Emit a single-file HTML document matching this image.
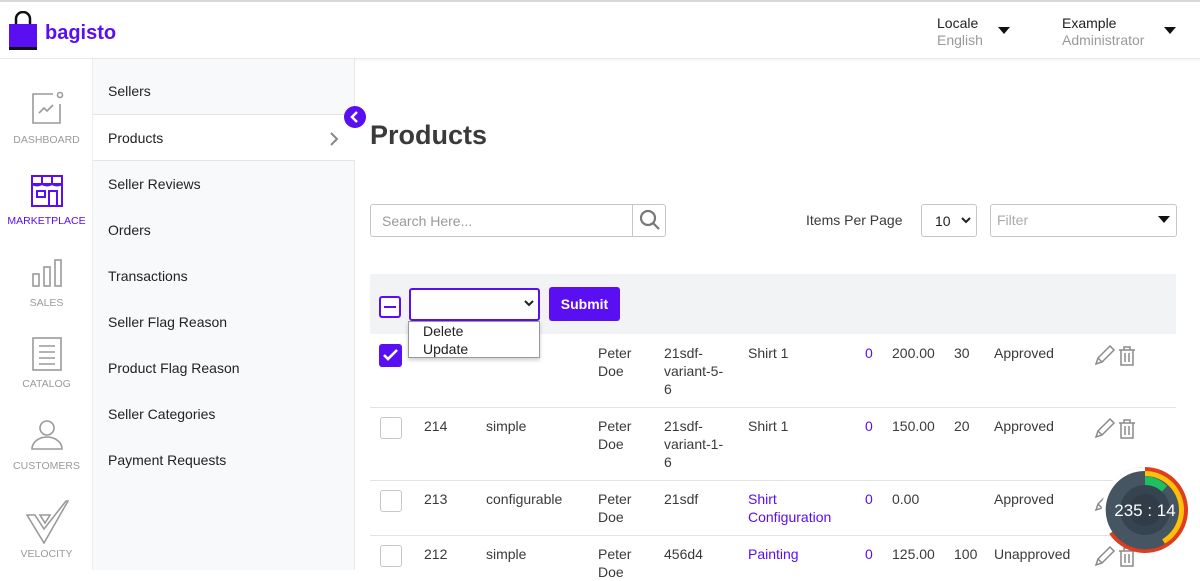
<!DOCTYPE html>
<html><head><style>
*{box-sizing:border-box;margin:0;padding:0}
body{width:1200px;height:570px;overflow:hidden;background:#fff;font-family:"Liberation Sans",sans-serif;color:#3a3a3a;position:relative;font-size:14px}
.a{position:absolute}
.top{left:0;top:0;width:1200px;height:2px;background:#d8d8d8}
.hdr{left:0;top:2px;width:1200px;height:57px;background:#fff;border-bottom:1px solid #e8e8e8;box-shadow:0 2px 3px rgba(0,0,0,.04)}
.nav{left:0;top:59px;width:93px;height:511px;background:#fff;border-right:1px solid #eee}
.sub{left:93px;top:59px;width:262px;height:511px;background:#f8f9fa;border-right:1px solid #e8e8e8}
.lbl{width:93px;text-align:center;font-size:10.5px;color:#9a9a9a;left:0}
.mi{left:108px;font-size:14px;color:#222}
.t{font-size:14px;color:#3a3a3a;line-height:18px}
.cb{width:22px;height:22px;border:1px solid #c7c7c7;border-radius:3px;background:#fff}
.hl{height:1px;background:#e2e2e2;left:370px;width:806px}
.pur{color:#5a0ef2}
</style></head><body>
<div class="a top"></div>
<div class="a hdr"></div>
<svg class="a" style="left:8px;top:11px" width="30" height="40" viewBox="0 0 30 40"><path d="M8 14V8a7 7 0 0 1 14 0v6" fill="none" stroke="#111" stroke-width="2.5"/><rect x="1" y="13" width="28" height="25" fill="#5a0ef2"/><rect x="1" y="36" width="28" height="3" fill="#111"/></svg>
<div class="a" style="left:45px;top:22px;font-size:20px;font-weight:bold;color:#5a0ef2">bagisto</div>
<div class="a" style="left:937px;top:15px;font-size:14px;color:#222">Locale</div>
<div class="a" style="left:937px;top:32px;font-size:14px;color:#9a9a9a">English</div>
<div class="a" style="left:998px;top:27px;border:6px solid transparent;border-top:7px solid #111;border-bottom:0"></div>
<div class="a" style="left:1062px;top:15px;font-size:14px;color:#222">Example</div>
<div class="a" style="left:1062px;top:32px;font-size:14px;color:#9a9a9a">Administrator</div>
<div class="a" style="left:1164px;top:27px;border:6px solid transparent;border-top:7px solid #111;border-bottom:0"></div>

<div class="a nav"></div>
<svg class="a" style="left:31px;top:91px" width="34" height="34" viewBox="0 0 34 34" fill="none" stroke="#9a9a9a" stroke-width="1.6"><path d="M22 3H2v29h27V13"/><circle cx="29" cy="4" r="2.5"/><path d="M8 22l5-5 3 3 6-6"/></svg>
<div class="a lbl" style="top:134px">DASHBOARD</div>
<svg class="a" style="left:31px;top:175px" width="32" height="32" viewBox="0 0 32 32" fill="none" stroke="#5a0ef2" stroke-width="2"><rect x="1" y="1" width="30" height="30"/><path d="M1 9h30M11 1v8M21 1v8M1 9q5 3 10 0q5 3 10 0q5 3 10 0"/><rect x="6" y="16" width="8" height="6"/><path d="M18 31V16h8v15"/></svg>
<div class="a lbl" style="top:215px;color:#5a0ef2">MARKETPLACE</div>
<svg class="a" style="left:32px;top:258px" width="30" height="30" viewBox="0 0 30 30" fill="none" stroke="#9a9a9a" stroke-width="1.6"><rect x="1" y="16" width="6" height="12"/><rect x="12" y="9" width="6" height="19"/><rect x="23" y="2" width="6" height="26"/></svg>
<div class="a lbl" style="top:297px">SALES</div>
<svg class="a" style="left:32px;top:337px" width="30" height="34" viewBox="0 0 30 34" fill="none" stroke="#9a9a9a" stroke-width="1.6"><rect x="1" y="1" width="28" height="32"/><path d="M7 9h16M7 15h16M7 21h16M7 27h16"/></svg>
<div class="a lbl" style="top:378px">CATALOG</div>
<svg class="a" style="left:31px;top:419px" width="32" height="32" viewBox="0 0 32 32" fill="none" stroke="#9a9a9a" stroke-width="1.6"><circle cx="16" cy="9" r="7"/><path d="M1 30a15 12 0 0 1 30 0z"/></svg>
<div class="a lbl" style="top:460px">CUSTOMERS</div>
<svg class="a" style="left:26px;top:500px" width="44" height="44" viewBox="0 0 44 44" fill="none" stroke="#9a9a9a" stroke-width="1.6"><path d="M1 15h8l9 14L40 1h2L18 43z"/><path d="M14 15h10l-5 8z"/></svg>
<div class="a lbl" style="top:548px">VELOCITY</div>

<div class="a sub"></div>
<div class="a" style="left:93px;top:114px;width:262px;height:47px;background:#fff;border-top:1px solid #e4e4e4;border-bottom:1px solid #e4e4e4"></div>
<div class="a mi" style="top:83px">Sellers</div>
<div class="a mi" style="top:130px">Products</div>
<svg class="a" style="left:329px;top:131px" width="10" height="16" viewBox="0 0 10 16"><path d="M2 2l6 6-6 6" fill="none" stroke="#888" stroke-width="2"/></svg>
<div class="a mi" style="top:176px">Seller Reviews</div>
<div class="a mi" style="top:222px">Orders</div>
<div class="a mi" style="top:268px">Transactions</div>
<div class="a mi" style="top:314px">Seller Flag Reason</div>
<div class="a mi" style="top:360px">Product Flag Reason</div>
<div class="a mi" style="top:406px">Seller Categories</div>
<div class="a mi" style="top:452px">Payment Requests</div>
<svg class="a" style="left:344px;top:106px" width="22" height="22" viewBox="0 0 22 22"><circle cx="11" cy="11" r="11" fill="#5a0ef2"/><path d="M13 6l-5 5 5 5" fill="none" stroke="#fff" stroke-width="2.5"/></svg>

<div class="a" style="left:370px;top:120px;font-size:27px;font-weight:bold;color:#3a3a3a">Products</div>

<div class="a" style="left:370px;top:204px;width:296px;height:33px;border:1px solid #c7c7c7;border-radius:3px"></div>
<div class="a" style="left:632px;top:205px;width:1px;height:31px;background:#c7c7c7"></div>
<div class="a" style="left:382px;top:213px;color:#999">Search Here...</div>
<svg class="a" style="left:639px;top:209px" width="22" height="22" viewBox="0 0 22 22" fill="none" stroke="#777" stroke-width="2.2"><circle cx="9" cy="9" r="7"/><path d="M14 14l6 6"/></svg>
<div class="a" style="left:806px;top:212px;color:#3a3a3a">Items Per Page</div>
<div class="a" style="left:921px;top:204px;width:56px;height:33px;border:1px solid #c7c7c7;border-radius:3px"></div>
<div class="a" style="left:935px;top:213px;color:#222">10</div>
<svg class="a" style="left:961px;top:217px" width="10" height="7" viewBox="0 0 10 7"><path d="M1 1l4 4 4-4" fill="none" stroke="#222" stroke-width="2"/></svg>
<div class="a" style="left:990px;top:204px;width:187px;height:33px;border:1px solid #c7c7c7;border-radius:3px"></div>
<div class="a" style="left:997px;top:212px;color:#aaa">Filter</div>
<div class="a" style="left:1158px;top:216px;border:6px solid transparent;border-top:7px solid #111;border-bottom:0"></div>

<div class="a" style="left:370px;top:274px;width:806px;height:60px;background:#f2f3f5"></div>
<div class="a" style="left:379px;top:296px;width:22px;height:22px;border:2px solid #5a0ef2;border-radius:3px;background:#fff"></div>
<div class="a" style="left:384px;top:306px;width:12px;height:2px;background:#5a0ef2"></div>
<div class="a" style="left:409px;top:288px;width:131px;height:33px;border:2px solid #5a0ef2;border-radius:3px;background:#fff"></div>
<svg class="a" style="left:524px;top:300px" width="10" height="7" viewBox="0 0 10 7"><path d="M1 1l4 4 4-4" fill="none" stroke="#222" stroke-width="2"/></svg>
<div class="a" style="left:549px;top:287px;width:71px;height:34px;background:#5a0ef2;border-radius:3px;color:#fff;font-weight:bold;font-size:14px;text-align:center;line-height:34px">Submit</div>

<div class="hl a" style="top:407px"></div>
<div class="hl a" style="top:480px"></div>
<div class="hl a" style="top:535px"></div>

<div class="a" style="left:379px;top:344px;width:23px;height:23px;background:#5a0ef2;border-radius:3px"></div>
<svg class="a" style="left:383px;top:349px" width="15" height="13" viewBox="0 0 15 13"><path d="M1 6l4 4 9-9" fill="none" stroke="#fff" stroke-width="2.6"/></svg>
<div class="a t" style="left:598px;top:344px">Peter<br>Doe</div>
<div class="a t" style="left:664px;top:344px">21sdf-<br>variant-5-<br>6</div>
<div class="a t" style="left:748px;top:344px">Shirt 1</div>
<div class="a t pur" style="left:865px;top:344px">0</div>
<div class="a t" style="left:892px;top:344px">200.00</div>
<div class="a t" style="left:954px;top:344px">30</div>
<div class="a t" style="left:994px;top:344px">Approved</div>

<div class="a cb" style="left:380px;top:417px"></div>
<div class="a t" style="left:424px;top:417px">214</div>
<div class="a t" style="left:486px;top:417px">simple</div>
<div class="a t" style="left:598px;top:417px">Peter<br>Doe</div>
<div class="a t" style="left:664px;top:417px">21sdf-<br>variant-1-<br>6</div>
<div class="a t" style="left:748px;top:417px">Shirt 1</div>
<div class="a t pur" style="left:865px;top:417px">0</div>
<div class="a t" style="left:892px;top:417px">150.00</div>
<div class="a t" style="left:954px;top:417px">20</div>
<div class="a t" style="left:994px;top:417px">Approved</div>

<div class="a cb" style="left:380px;top:490px"></div>
<div class="a t" style="left:424px;top:490px">213</div>
<div class="a t" style="left:486px;top:490px">configurable</div>
<div class="a t" style="left:598px;top:490px">Peter<br>Doe</div>
<div class="a t" style="left:664px;top:490px">21sdf</div>
<div class="a t pur" style="left:748px;top:490px">Shirt<br>Configuration</div>
<div class="a t pur" style="left:865px;top:490px">0</div>
<div class="a t" style="left:892px;top:490px">0.00</div>
<div class="a t" style="left:994px;top:490px">Approved</div>

<div class="a cb" style="left:380px;top:545px"></div>
<div class="a t" style="left:424px;top:545px">212</div>
<div class="a t" style="left:486px;top:545px">simple</div>
<div class="a t" style="left:598px;top:545px">Peter<br>Doe</div>
<div class="a t" style="left:664px;top:545px">456d4</div>
<div class="a t pur" style="left:748px;top:545px">Painting</div>
<div class="a t pur" style="left:865px;top:545px">0</div>
<div class="a t" style="left:892px;top:545px">125.00</div>
<div class="a t" style="left:954px;top:545px">100</div>
<div class="a t" style="left:994px;top:545px">Unapproved</div>

<svg class="a" style="left:1093px;top:343px" width="46" height="225" viewBox="0 0 46 225" fill="none" stroke="#8a8a8a" stroke-width="1.5">
<g id="ic"><path d="M3 21l2-6L17 3l4 4L9 19z M5 15l4 4"/><path d="M26 7h16M31 7V4h6v3M28 7v15h12V7M32 10v9M36 10v9"/></g>
<use href="#ic" y="73"/><use href="#ic" y="146"/><use href="#ic" y="201"/>
</svg>

<div class="a" style="left:408px;top:321px;width:132px;height:37px;background:#fff;border:1px solid #999;box-shadow:0 2px 4px rgba(0,0,0,.2)"></div>
<div class="a" style="left:423px;top:322px;font-size:14px;color:#222;line-height:18px">Delete<br>Update</div>

<svg class="a" style="left:1101px;top:464px" width="90" height="92" viewBox="0 0 90 92">
<circle cx="44" cy="46" r="43" fill="#df3d1f"/>
<path d="M44 46V3A43 43 0 0 0 8 70z" fill="#fff"/>
<circle cx="44" cy="46" r="39" fill="#ffc107"/>
<path d="M44 46V7A39 39 0 0 0 20 77z" fill="#465562"/>
<path d="M44 46L64 80A39 39 0 0 1 20 77z" fill="#465562"/>
<circle cx="44" cy="46" r="34" fill="#465562"/>
<path d="M44 46V12A34 34 0 0 1 66 22z" fill="#1dbf60"/>
<circle cx="44" cy="46" r="25" fill="#364450"/>
<circle cx="44" cy="46" r="16" fill="#2d3a44" opacity=".7"/>
<text x="44" y="52" text-anchor="middle" font-family="Liberation Sans" font-size="17" fill="#fff">235 : 14</text>
</svg>
</body></html>
